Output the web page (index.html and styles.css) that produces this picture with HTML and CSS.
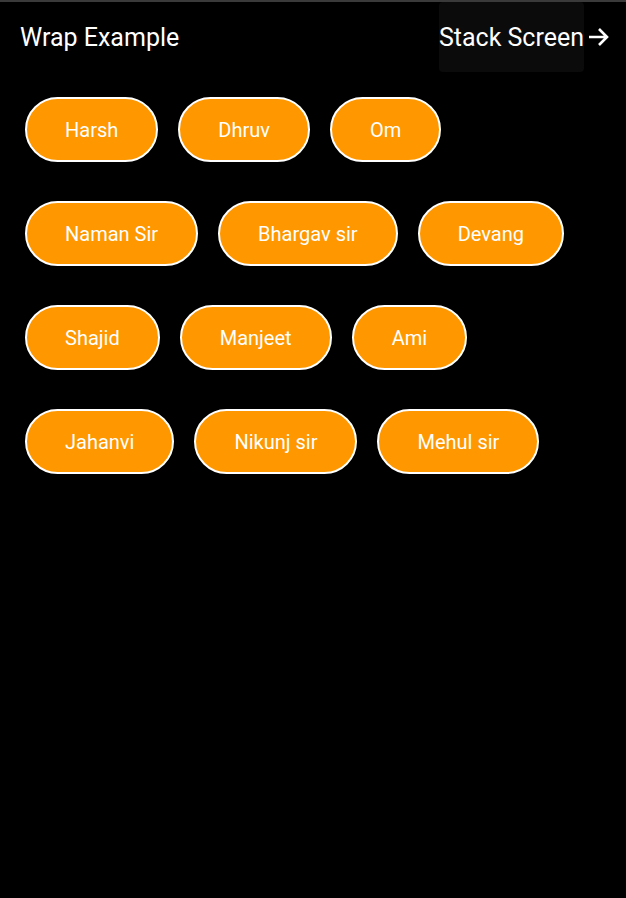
FILE: index.html
```html
<!DOCTYPE html>
<html lang="en">

<head>
  <meta charset="UTF-8">
  <meta name="viewport" content="width=device-width, initial-scale=1.0">
  <title>Wrap Example</title>
  <link rel="stylesheet" href="styles.css">
</head>

<body>
  <div class="status-line"></div>
  <header class="app-bar">
    <h1 class="title">Wrap Example</h1>
    <div class="actions">
      <button class="stack-btn">Stack Screen</button>
      <svg class="arrow" width="22" height="20" viewBox="0 0 22 20">
        <path d="M1 10 H19 M11 2 L19 10 L11 18" fill="none" stroke="#fff" stroke-width="2.6" />
      </svg>
    </div>
  </header>

  <main class="chips">
    <div class="chip-row">
      <div class="chip">Harsh</div>
      <div class="chip">Dhruv</div>
      <div class="chip">Om</div>
    </div>
    <div class="chip-row">
      <div class="chip">Naman Sir</div>
      <div class="chip">Bhargav sir</div>
      <div class="chip">Devang</div>
    </div>
    <div class="chip-row">
      <div class="chip">Shajid</div>
      <div class="chip">Manjeet</div>
      <div class="chip">Ami</div>
    </div>
    <div class="chip-row">
      <div class="chip">Jahanvi</div>
      <div class="chip">Nikunj sir</div>
      <div class="chip">Mehul sir</div>
    </div>
  </main>
</body>

</html>
```

FILE: styles.css
```css
body {
  font-family: Roboto, "Liberation Sans", sans-serif;
  background-color: #000;
  color: #fff;
  margin: 0;
  padding: 0;
  height: 100vh;
}

.status-line {
  height: 2px;
  background-color: #3a3a3a;
}

.app-bar {
  display: flex;
  justify-content: space-between;
  align-items: center;
  height: 70px;
  padding: 0 16px 0 20px;
}

.title {
  font-size: 25px;
  font-weight: 400;
  margin: 0;
}

.actions {
  display: flex;
  align-items: center;
  height: 100%;
}

.stack-btn {
  font-family: inherit;
  font-size: 25px;
  color: #fff;
  background-color: #0b0b0b;
  border: none;
  border-radius: 4px;
  height: 70px;
  min-width: 144px;
  padding: 0;
  display: flex;
  align-items: center;
  justify-content: flex-end;
  cursor: pointer;
}

.arrow {
  margin-left: 4px;
}

.chips {
  display: flex;
  flex-direction: column;
  gap: 39px;
  padding: 25px;
}

.chip-row {
  display: flex;
  flex-wrap: wrap;
  gap: 20px;
}

.chip {
  box-sizing: border-box;
  height: 65px;
  padding: 0 38px;
  display: flex;
  align-items: center;
  justify-content: center;
  background-color: #ff9800;
  border: 2px solid #fff;
  border-radius: 33px;
  font-size: 20px;
}
```
